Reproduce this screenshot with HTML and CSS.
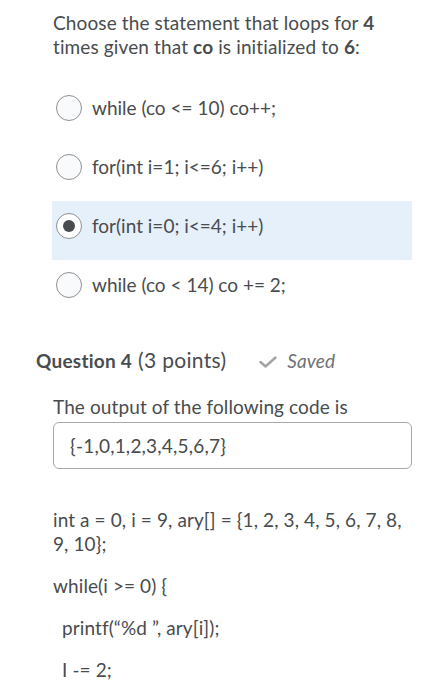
FILE: index.html
```html
<!DOCTYPE html>
<html lang="en">
<head>
<meta charset="utf-8">
<title>Quiz</title>
<link rel="stylesheet" href="styles.css">
</head>
<body>
<main class="page">
  <section class="question">
    <p class="prompt">Choose the statement that loops for <b>4</b> times given that <b>co</b> is initialized to <b>6</b>:</p>
    <ul class="options">
      <li class="option"><span class="radio"></span><span class="opt-text">while (co &lt;= 10) co++;</span></li>
      <li class="option"><span class="radio"></span><span class="opt-text">for(int i=1; i&lt;=6; i++)</span></li>
      <li class="option selected"><span class="radio checked"></span><span class="opt-text">for(int i=0; i&lt;=4; i++)</span></li>
      <li class="option"><span class="radio"></span><span class="opt-text">while (co &lt; 14) co += 2;</span></li>
    </ul>
  </section>

  <section class="question">
    <h2 class="q-header">
      <span class="q-title">Question 4</span>
      <span class="q-points">(3 points)</span>
      <span class="saved">
        <svg class="check" width="18" height="12" viewBox="0 0 18 12" aria-hidden="true"><polyline points="1.5,6 6.5,10.5 16.5,1.5" fill="none" stroke="#a3a3a3" stroke-width="2.4" stroke-linecap="round" stroke-linejoin="round"/></svg>
        <em>Saved</em>
      </span>
    </h2>
    <p class="text-line">The output of the following code is</p>
    <div class="answer-box">{-1,0,1,2,3,4,5,6,7}</div>
    <div class="code">
      <p>int a = 0, i = 9, ary[] = {1, 2, 3, 4, 5, 6, 7, 8, 9, 10};</p>
      <p>while(i &gt;= 0) {</p>
      <p class="indent">printf(“%d ”, ary[i]);</p>
      <p class="indent">I -= 2;</p>
    </div>
  </section>
</main>
</body>
</html>
```
FILE: styles.css
```css
* { box-sizing: border-box; }
html, body { margin: 0; padding: 0; background: #ffffff; }
body {
  font-family: Lato, "Open Sans", sans-serif;
  color: #494c4e;
  font-size: 19px;
  letter-spacing: 0;
}
.page {
  width: 360px;
  margin-left: 52px;
  padding-top: 11px;
}
.prompt {
  margin: 0 0 0 1px;
  line-height: 24px;
  letter-spacing: 0.12px;
}
.prompt b { font-weight: 700; }
.options {
  list-style: none;
  margin: 24px 0 0 0;
  padding: 0;
}
.option {
  display: flex;
  align-items: flex-start;
  gap: 10px;
  height: 59px;
  padding: 12px 0 0 4px;
}
.option.selected { background: #e6f0fb; }
.radio {
  flex: 0 0 26px;
  width: 26px;
  height: 26px;
  border-radius: 50%;
  border: 1.5px solid #8e9092;
  background: #f9fafc;
  display: flex;
  align-items: center;
  justify-content: center;
}
.radio.checked { background: #ffffff; }
.radio.checked::after {
  content: "";
  width: 12px;
  height: 12px;
  border-radius: 50%;
  background: #494c4e;
}
.opt-text {
  line-height: 26px;
}
.q-header {
  margin: 28px 0 0 -16px;
  display: flex;
  align-items: baseline;
  font-weight: normal;
  font-size: 19px;
}
.q-title { font-weight: 700; letter-spacing: 0.25px; }
.q-points { font-size: 21px; margin-left: 6px; letter-spacing: 0.3px; }
.saved {
  margin-left: 33px;
  display: inline-flex;
  align-items: baseline;
  gap: 10px;
  color: #6f7274;
  font-size: 19px;
  letter-spacing: 0.1px;
}
.saved em { font-style: italic; }
.text-line {
  margin: 23px 0 0 1px;
  line-height: 24px;
  letter-spacing: 0.1px;
}
.answer-box {
  margin: 3px 0 0 1px;
  height: 47px;
  border: 1px solid #a6a8aa;
  border-radius: 6px;
  padding: 0 0 0 16px;
  font-size: 19px;
  letter-spacing: 0.2px;
  line-height: 45px;
}
.code { margin-top: 39px; padding-left: 1px; letter-spacing: 0.1px; }
.code p {
  margin: 0 0 18px 0;
  line-height: 24px;
}
.code .indent { padding-left: 9px; }
```
